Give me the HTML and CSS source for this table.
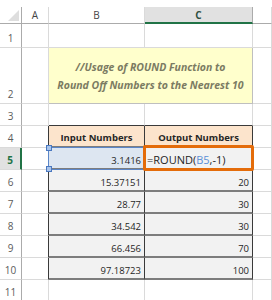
FILE: index.html
```html
<!DOCTYPE html>
<html>
<head>
<meta charset="utf-8">
<link rel="stylesheet" href="styles.css">
</head>
<body>
<div class="sheet">
  <div class="topgap"></div>
  <div class="grid">
    <div class="corner"><span class="tri"></span></div>
    <div class="colh">A</div>
    <div class="colh">B</div>
    <div class="colh sel">C</div>
    <div class="colh"></div>

    <div class="rowh">1</div><div class="c"></div><div class="c"></div><div class="c"></div><div class="c"></div>

    <div class="rowh">2</div><div class="c"></div>
    <div class="title"><span>//Usage of ROUND Function to</span><span>Round Off Numbers to the Nearest 10</span></div>
    <div class="c"></div>

    <div class="rowh">3</div><div class="c"></div><div class="c tb"></div><div class="c tb"></div><div class="c"></div>

    <div class="rowh">4</div><div class="c tl"></div><div class="t th">Input Numbers</div><div class="t th">Output Numbers</div><div class="c"></div>

    <div class="rowh sel">5</div><div class="c tl"></div>
    <div class="t td ref">3.1416<span class="refbox"></span><span class="hd h1"></span><span class="hd h2"></span></div>
    <div class="t td fx">=ROUND(<span class="blue">B5</span>,-1)<span class="fxbox"></span></div>
    <div class="c"></div>

    <div class="rowh">6</div><div class="c tl"></div><div class="t td">15.37151</div><div class="t td">20</div><div class="c"></div>
    <div class="rowh">7</div><div class="c tl"></div><div class="t td">28.77</div><div class="t td">30</div><div class="c"></div>
    <div class="rowh">8</div><div class="c tl"></div><div class="t td">34.542</div><div class="t td">30</div><div class="c"></div>
    <div class="rowh">9</div><div class="c tl"></div><div class="t td">66.456</div><div class="t td">70</div><div class="c"></div>
    <div class="rowh">10</div><div class="c tl"></div><div class="t td">97.18723</div><div class="t td">100</div><div class="c"></div>

    <div class="rowh">11</div><div class="c"></div><div class="c"></div><div class="c"></div><div class="c"></div>
  </div>
</div>
</body>
</html>
```

FILE: styles.css
```css
html, body {
  margin: 0;
  padding: 0;
  background: #ffffff;
}
.sheet {
  width: 272px;
  height: 300px;
  overflow: hidden;
  font-family: "Open Sans", "Liberation Sans", sans-serif;
}
.topgap {
  height: 7px;
}
.grid {
  display: grid;
  grid-template-columns: 22px 27px 96px 108px 1fr;
  grid-template-rows: 17px 24px 56px repeat(9, 22px);
}
.grid > div {
  box-sizing: border-box;
  border-right: 1px solid #dadada;
  border-bottom: 1px solid #dadada;
}
.corner {
  position: relative;
  border-bottom: 1px solid #ababab !important;
  border-right: 1px solid #ababab !important;
}
.tri {
  position: absolute;
  right: 2px;
  bottom: 2px;
  width: 0;
  height: 0;
  border-left: 11px solid transparent;
  border-bottom: 11px solid #dedede;
}
.colh {
  display: flex;
  align-items: center;
  justify-content: center;
  font-size: 10px;
  color: #444444;
  border-bottom: 1px solid #ababab !important;
}
.colh.sel {
  background: #e1e1e1;
  color: #2f4f3f;
  font-weight: bold;
  border-bottom: 2px solid #217346 !important;
  border-right: 1px solid #ababab !important;
}
.rowh {
  display: flex;
  align-items: flex-end;
  justify-content: center;
  padding-bottom: 4px;
  font-size: 10px;
  line-height: 1;
  color: #5b5b5b;
  border-right: 1px solid #ababab !important;
}
.rowh.sel {
  background: #e1e1e1;
  color: #217346;
  font-weight: bold;
  border-right: 2px solid #217346 !important;
}
.title {
  grid-column: span 2;
  background: #ffffcc;
  border-right: 1px solid #bfbfbf !important;
  border-bottom: 1px solid #bfbfbf !important;
  display: flex;
  flex-direction: column;
  align-items: center;
  justify-content: center;
  font-size: 10.5px;
  line-height: 18px;
  font-weight: bold;
  font-style: italic;
  color: #7b7b62;
}
.tb {
  border-bottom: 1px solid #3a3a3a !important;
}
.tl {
  border-right: 1px solid #3a3a3a !important;
}
.t {
  border-right: 1px solid #3a3a3a !important;
  border-bottom: 2px solid #7d7d7d !important;
  display: flex;
  align-items: flex-end;
  font-size: 9.5px;
  line-height: 1;
  padding-bottom: 3px;
  color: #1f1f1f;
}
.th {
  background: #fce4cc;
  justify-content: center;
  font-weight: bold;
  color: #262626;
  padding-bottom: 4px;
}
.td {
  background: #f2f2f2;
  justify-content: flex-end;
  padding-right: 3px;
}
.ref {
  position: relative;
  background: #dde6f1;
}
.refbox {
  position: absolute;
  left: -1px;
  top: -1px;
  right: -1px;
  bottom: -2px;
  border: 1px solid #5b86c8;
}
.hd {
  position: absolute;
  width: 4px;
  height: 4px;
  background: #a9c4ea;
  border: 1px solid #4a78c0;
}
.h1 {
  left: -3px;
  top: -3px;
}
.h2 {
  left: -3px;
  bottom: -4px;
}
.fx {
  position: relative;
  justify-content: flex-start;
  padding-left: 2px;
  padding-right: 0;
  font-size: 11px;
  color: #1f1f1f;
}
.blue {
  color: #5b8fd6;
}
.fxbox {
  position: absolute;
  left: -2px;
  top: -3px;
  right: -2px;
  bottom: -3px;
  border: 3px solid #e46c0a;
  border-radius: 2px;
}
```
